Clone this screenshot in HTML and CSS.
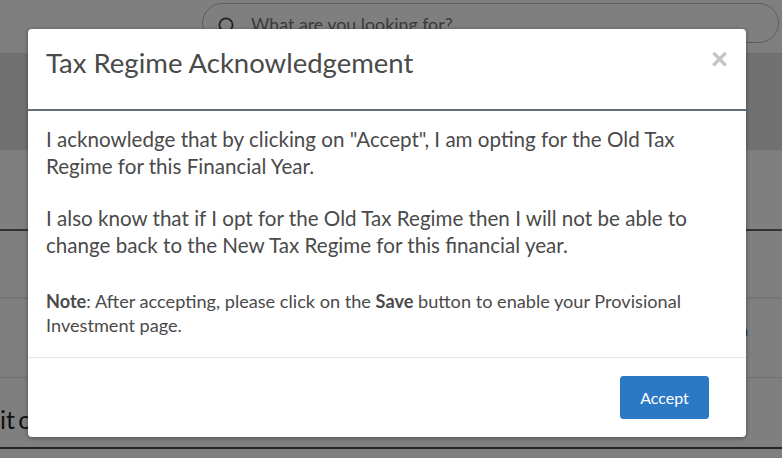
FILE: index.html
```html
<!DOCTYPE html>
<html lang="en">
<head>
<meta charset="utf-8">
<title>Tax Regime Acknowledgement</title>
<link rel="stylesheet" href="styles.css">
</head>
<body>
<div class="page">
  <header class="topbar">
    <div class="search">
      <svg class="search-icon" width="20" height="20" viewBox="0 0 20 20"><circle cx="8" cy="8" r="6.6" fill="none" stroke="#444" stroke-width="1.8"/><path d="M13 13l6 6" stroke="#444" stroke-width="1.8"/></svg>
      <span class="search-text">What are you looking for?</span>
    </div>
  </header>
  <section class="banner"></section>
  <section class="row row-a"></section>
  <section class="row row-b"></section>
  <section class="row row-c"><span class="link">n</span></section>
  <section class="row row-d"><span class="cut">it of</span></section>
  <section class="row row-e"></section>
</div>
<div class="backdrop"></div>
<div class="modal">
  <div class="modal-header">
    <h4 class="modal-title">Tax Regime Acknowledgement</h4>
    <span class="close">×</span>
  </div>
  <div class="modal-body">
    <p class="lead">I acknowledge that by clicking on "Accept", I am opting for the Old Tax Regime for this Financial Year.</p>
    <p class="lead">I also know that if I opt for the Old Tax Regime then I will not be able to change back to the New Tax Regime for this financial year.</p>
    <p class="note"><b>Note</b>: After accepting, please click on the <b>Save</b> button to enable your Provisional Investment page.</p>
  </div>
  <div class="modal-footer">
    <button class="accept">Accept</button>
  </div>
</div>
</body>
</html>
```
FILE: styles.css
```css
* { box-sizing: border-box; }
html, body { margin: 0; height: 100%; overflow: hidden; }
body { width: 782px; height: 458px; background: #fff; font-family: "Lato", sans-serif; position: relative; }
.page { display: flex; flex-direction: column; height: 458px; }
.topbar { height: 54px; background: #fff; border-bottom: 1px solid #ddd; padding: 3px 3px 0 202px; }
.search { height: 40px; border: 1px solid #bbb; border-radius: 20px; display: flex; align-items: flex-start; padding: 13px 0 0 15px; gap: 13px; }
.search-text { font-size: 17.8px; line-height: 14px; color: #777; }
.banner { height: 96px; background: #e3e3e3; }
.row-a { height: 81px; border-bottom: 2px solid #666; }
.row-b { height: 68px; border-bottom: 2px solid #dfeaf2; }
.row-c { height: 79px; border-bottom: 1px solid #e3e3e3; display: flex; justify-content: flex-end; align-items: center; padding: 0 34px 16px 0; }
.link { color: #2a76c6; font-size: 14px; }
.row-d { height: 71px; position: relative; font-size: 25px; color: #222; border-bottom: 2px solid #444; }
.row-e { flex: 1; background: #fff; }
.cut { position: absolute; left: 0; top: 26px; word-spacing: -3px; }
.backdrop { position: absolute; inset: 0; background: rgba(0,0,0,.5); }
.modal { position: absolute; left: 28px; top: 29px; width: 718px; height: 408px; background: #fff; border-radius: 4px; box-shadow: 0 1px 4px rgba(0,0,0,.4); color: #4a4a4a; display: flex; flex-direction: column; }
.modal-header { height: 82px; border-bottom: 2px solid #5f6e78; padding: 17px 18px 0; display: flex; justify-content: space-between; }
.modal-title { margin: 0; font-size: 27.5px; font-weight: 400; line-height: 34px; }
.close { font: 700 29px/26px "Liberation Sans", sans-serif; color: #c4c4c4; }
.modal-body { flex: 1; padding: 15px 18px 0; }
.lead { margin: 0 0 25px; font-size: 20.6px; line-height: 27px; }
.note { margin: 30px 0 0; font-size: 18.15px; line-height: 24px; }
.modal-footer { height: 80px; border-top: 1px solid #e5e5e5; display: flex; justify-content: flex-end; align-items: flex-start; padding: 18px 37px 0 0; }
.accept { width: 89px; height: 43px; background: #2b78c5; color: #fff; border: 1px solid #2b78c5; border-radius: 3px; font: 400 16px "Lato", sans-serif; }
```
